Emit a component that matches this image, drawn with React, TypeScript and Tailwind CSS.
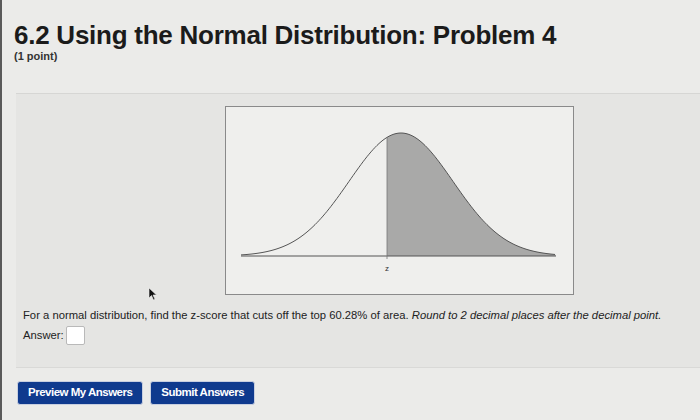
import React from 'react';

const W = 349;
const H = 189;
const BASE = 149;
const MU = 175;
const SIGMA = 52;
const AMP = 123;
const Z = 161;

const yAt = (x: number) => BASE - AMP * Math.exp(-((x - MU) ** 2) / (2 * SIGMA * SIGMA));

const curvePoints = () => {
    const pts: string[] = [];
    for (let x = 15; x <= 330; x += 2) pts.push(`${x},${yAt(x).toFixed(2)}`);
    return pts;
};

const NormalGraph: React.FC = () => {
    const pts = curvePoints();
    const shade: string[] = [];
    for (let x = Z; x <= 330; x += 2) shade.push(`${x},${yAt(x).toFixed(2)}`);
    return (
        <svg width={W} height={H} viewBox={`0 0 ${W} ${H}`}>
            <polygon points={`${Z},${BASE} ${shade.join(' ')} 330,${BASE}`} fill="#a9a9a8" />
            <polyline points={pts.join(' ')} fill="none" stroke="#555" strokeWidth="1" />
            <line x1="15" y1={BASE} x2="330" y2={BASE} stroke="#555" strokeWidth="1.2" />
            <line x1={Z} y1={yAt(Z)} x2={Z} y2={BASE + 3} stroke="#777" strokeWidth="0.8" />
            <text x={Z} y={BASE + 15} fontSize="8" fill="#333" textAnchor="middle" fontFamily="Liberation Sans, sans-serif">z</text>
        </svg>
    );
};

export default function App() {
    return (
        <div className="relative w-[700px] h-[420px] overflow-hidden bg-[#ebebe9] border-l-2 border-[#5a5a5a] font-['Liberation_Sans',Arial,sans-serif] text-[#1b1b1b]">
            <div className="pl-[12px] pt-[20px]">
                <h1 className="text-[26px] leading-[30px] font-bold tracking-[-0.25px]">6.2 Using the Normal Distribution: Problem 4</h1>
                <p className="text-[11px] leading-[12px] font-bold text-[#333]">(1 point)</p>
            </div>

            <div className="ml-[14px] mt-[31px] h-[275px] bg-[#e5e5e3] border-t border-[#d6d6d4] border-b border-b-[#d9d9d7] pt-[12px]">
                <div className="ml-[209px] w-[349px] h-[189px] bg-[#efefed] border border-[#8a8a8a]">
                    <NormalGraph />
                </div>
                <p className="mt-[13px] ml-[7px] text-[11.25px] leading-[14px] text-[#222]">
                    For a normal distribution, find the z-score that cuts off the top 60.28% of area. <i>Round to 2 decimal places after the decimal point.</i>
                </p>
                <div className="mt-[4px] ml-[7px] flex items-center gap-[2px]">
                    <span className="text-[11.25px] text-[#222]">Answer:</span>
                    <div className="w-[19px] h-[19px] bg-white border border-[#b9b9b9] rounded-[2px]" />
                </div>
            </div>

            <div className="ml-[15px] mt-[13px] flex gap-[7px]">
                <button className="h-[24px] px-[10px] bg-[#0f3a8e] text-white text-[11.5px] font-bold tracking-[-0.5px] rounded-[3px] border border-[#c8cfe0]">Preview My Answers</button>
                <button className="h-[24px] px-[10px] bg-[#0f3a8e] text-white text-[11.5px] font-bold tracking-[-0.5px] rounded-[3px] border border-[#c8cfe0]">Submit Answers</button>
            </div>

            <svg className="absolute left-[146px] top-[287px]" width="10" height="14" viewBox="0 0 10 14">
                <path d="M1 1 L1 11 L3.5 8.5 L5.5 13 L7 12.3 L5 8 L8.5 8 Z" fill="#111" stroke="#eee" strokeWidth="0.6" />
            </svg>
        </div>
    );
}
